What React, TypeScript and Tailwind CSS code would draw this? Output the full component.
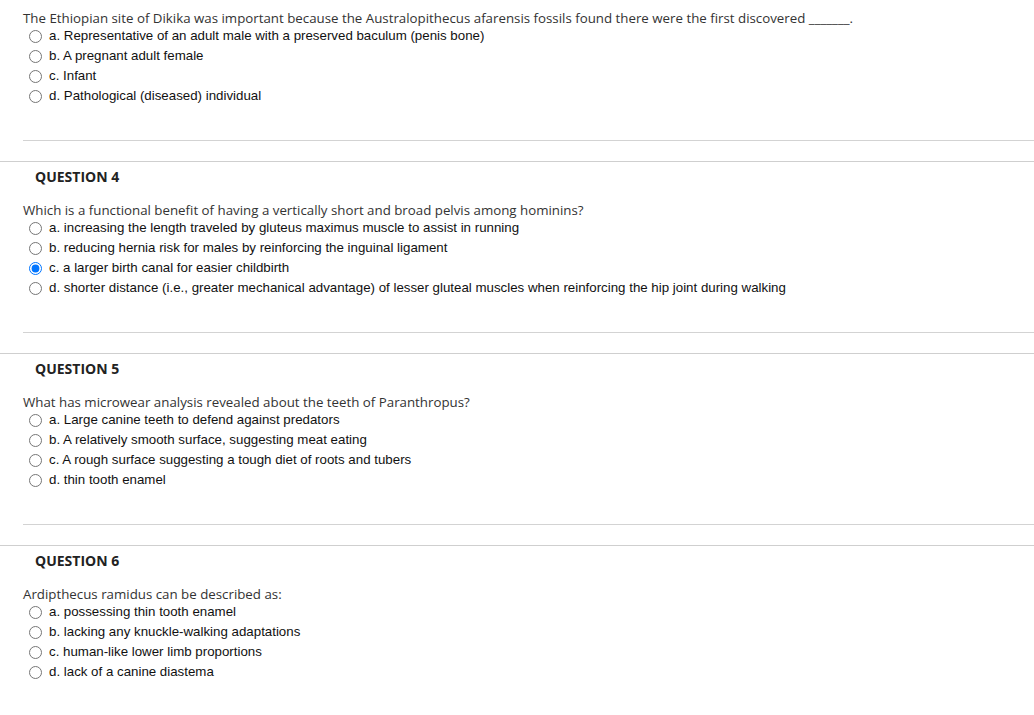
const QUESTIONS = [
  {
    heading: null,
    text: "The Ethiopian site of Dikika was important because the Australopithecus afarensis fossils found there were the first discovered _______.",
    answers: [
      "a. Representative of an adult male with a preserved baculum (penis bone)",
      "b. A pregnant adult female",
      "c. Infant",
      "d. Pathological (diseased) individual",
    ],
    selected: -1,
  },
  {
    heading: "QUESTION 4",
    text: "Which is a functional benefit of having a vertically short and broad pelvis among hominins?",
    answers: [
      "a. increasing the length traveled by gluteus maximus muscle to assist in running",
      "b. reducing hernia risk for males by reinforcing the inguinal ligament",
      "c. a larger birth canal for easier childbirth",
      "d. shorter distance (i.e., greater mechanical advantage) of lesser gluteal muscles when reinforcing the hip joint during walking",
    ],
    selected: 2,
  },
  {
    heading: "QUESTION 5",
    text: "What has microwear analysis revealed about the teeth of Paranthropus?",
    answers: [
      "a. Large canine teeth to defend against predators",
      "b. A relatively smooth surface, suggesting meat eating",
      "c. A rough surface suggesting a tough diet of roots and tubers",
      "d. thin tooth enamel",
    ],
    selected: -1,
  },
  {
    heading: "QUESTION 6",
    text: "Ardipthecus ramidus can be described as:",
    answers: [
      "a. possessing thin tooth enamel",
      "b. lacking any knuckle-walking adaptations",
      "c. human-like lower limb proportions",
      "d. lack of a canine diastema",
    ],
    selected: -1,
  },
];

type Question = (typeof QUESTIONS)[number];

export default function App() {
  return (
    <div className="min-h-[715px] w-[1034px] bg-white">
      {QUESTIONS.map((q, i) => (
        <QuestionBlock key={i} q={q} index={i} />
      ))}
    </div>
  );
}

function QuestionBlock({ q, index }: { q: Question; index: number }) {
  return (
    <div>
      {q.heading ? (
        <>
          <div className="ml-[23px] border-t border-[#d3d3d3]" />
          <div className="mt-[20px] border-t border-[#cfcfcf]" />
          <h2
            className="pl-[35px] pt-[6px] text-[14px] font-bold leading-[18px] text-[#222]"
            style={{ fontFamily: '"Open Sans", sans-serif' }}
          >
            {q.heading}
          </h2>
        </>
      ) : null}
      <p
        className={`pl-[23px] text-[13.3px] leading-[16px] text-[#333] ${index === 0 ? "pt-[10px]" : "pt-[16px]"}`}
        style={{ fontFamily: '"Open Sans", sans-serif' }}
      >
        {q.text}
      </p>
      <ul
        className="mb-[34px] text-[13.3px] text-[#111]"
        style={{ fontFamily: '"Liberation Sans", Arial, sans-serif' }}
      >
        {q.answers.map((a, j) => (
          <li key={j} className="flex h-[20px] items-center gap-[7px] pl-[29px]">
            <input
              type="radio"
              name={`q${index}`}
              defaultChecked={q.selected === j}
              className="m-0 h-[13px] w-[13px]"
            />
            <span>{a}</span>
          </li>
        ))}
      </ul>
    </div>
  );
}
